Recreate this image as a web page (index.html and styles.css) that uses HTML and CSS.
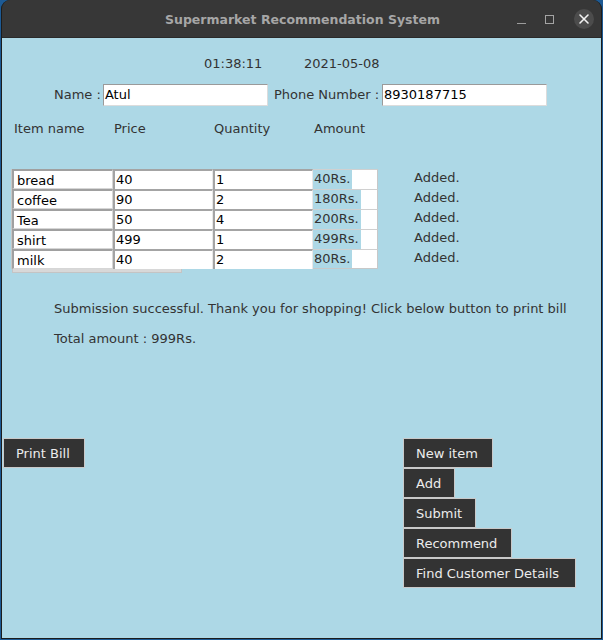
FILE: index.html
```html
<!DOCTYPE html>
<html>
<head>
<meta charset="utf-8">
<title>Supermarket Recommendation System</title>
<link rel="stylesheet" href="styles.css">
</head>
<body>
<div class="window">
  <div class="titlebar">
    <div class="title">Supermarket Recommendation System</div>
    <div class="controls">
      <span class="ctl min"></span>
      <span class="ctl max"></span>
      <span class="ctl close">
        <svg width="20" height="20" viewBox="0 0 20 20"><path d="M6 6 L14 14 M14 6 L6 14" stroke="#f2f2f2" stroke-width="1.6" stroke-linecap="round"/></svg>
      </span>
    </div>
  </div>
  <div class="content">
    <div class="datetime">
      <span class="dt">01:38:11</span>
      <span class="dt">2021-05-08</span>
    </div>
    <div class="customer">
      <span class="lbl name-lbl">Name :</span>
      <div class="entry wide">Atul</div>
      <span class="lbl phone-lbl">Phone Number :</span>
      <div class="entry wide">8930187715</div>
    </div>
    <div class="headers">
      <span>Item name</span>
      <span>Price</span>
      <span>Quantity</span>
      <span>Amount</span>
    </div>
    <div class="table-wrap">
      <div class="table">
        <div class="row"><div class="cell item">bread</div><div class="cell num">40</div><div class="cell num">1</div><div class="amount"><span class="amt">40Rs.</span></div><span class="status">Added.</span></div>
        <div class="row"><div class="cell item">coffee</div><div class="cell num">90</div><div class="cell num">2</div><div class="amount"><span class="amt">180Rs.</span></div><span class="status">Added.</span></div>
        <div class="row"><div class="cell item">Tea</div><div class="cell num">50</div><div class="cell num">4</div><div class="amount"><span class="amt">200Rs.</span></div><span class="status">Added.</span></div>
        <div class="row"><div class="cell item">shirt</div><div class="cell num">499</div><div class="cell num">1</div><div class="amount"><span class="amt">499Rs.</span></div><span class="status">Added.</span></div>
        <div class="row"><div class="cell item">milk</div><div class="cell num">40</div><div class="cell num">2</div><div class="amount"><span class="amt">80Rs.</span></div><span class="status">Added.</span></div>
      </div>
      <div class="strip"></div>
    </div>
    <p class="msg first">Submission successful. Thank you for shopping! Click below button to print bill</p>
    <p class="msg">Total amount : 999Rs.</p>
    <div class="actions">
      <div class="left-col">
        <button class="btn print">Print Bill</button>
      </div>
      <div class="right-col">
        <button class="btn w-new">New item</button>
        <button class="btn w-add">Add</button>
        <button class="btn w-submit">Submit</button>
        <button class="btn w-rec">Recommend</button>
        <button class="btn w-find">Find Customer Details</button>
      </div>
    </div>
  </div>
</div>
</body>
</html>
```
FILE: styles.css
```css
* { box-sizing: border-box; }
html, body {
  margin: 0;
  padding: 0;
  width: 603px;
  height: 640px;
  overflow: hidden;
  background: #1d5a94;
}
.window {
  margin-left: 1px;
  width: 601px;
  height: 639px;
  display: flex;
  flex-direction: column;
  border-radius: 9px 9px 0 0;
  overflow: hidden;
  background: #222;
  border: 1px solid #1c1c1c;
  border-top: none;
}
.titlebar {
  height: 38px;
  flex: none;
  background: #373737;
  position: relative;
  display: flex;
  align-items: center;
  justify-content: center;
  border-bottom: 1px solid #2a2a2a;
}
.title {
  font-family: "DejaVu Sans", sans-serif;
  font-weight: bold;
  font-size: 12.5px;
  color: #a6a6a6;
  margin-left: 2px;
  margin-top: 1px;
}
.controls {
  position: absolute;
  right: 7px;
  top: 9px;
  display: flex;
  align-items: center;
}
.ctl { display: block; position: relative; }
.min {
  width: 9px;
  height: 1px;
  background: #9c9c9c;
  margin-top: 9px;
  margin-right: 19px;
}
.max {
  width: 9px;
  height: 9px;
  border: 1px solid #a4a4a4;
  margin-right: 20px;
}
.close {
  width: 20px;
  height: 20px;
  border-radius: 50%;
  background: #4c4c4c;
}
.close svg { display: block; }

.content {
  flex: 1;
  background: #add8e6;
  font-family: "DejaVu Sans", sans-serif;
  font-size: 13px;
  color: #333;
  line-height: 16px;
}
.datetime {
  margin-top: 18px;
  display: flex;
  padding-left: 202px;
  height: 16px;
}
.dt { width: 100px; }
.customer {
  margin-top: 12px;
  display: flex;
  align-items: center;
  height: 22px;
}
.lbl { white-space: nowrap; }
.name-lbl { margin-left: 52px; margin-right: 2px; }
.phone-lbl { margin-left: 6px; margin-right: 3px; }
.entry {
  height: 22px;
  background: #fff;
  color: #000;
  border: 1px solid;
  border-color: #9a9a9a #dcdcdc #dcdcdc #9a9a9a;
  padding: 2px 1px;
  line-height: 16px;
}
.wide { width: 165px; }
.headers {
  margin-top: 15px;
  height: 16px;
  display: grid;
  grid-template-columns: repeat(4, 100px);
  padding-left: 12px;
}
.table-wrap {
  margin-top: 31px;
  margin-left: 10px;
}
.table {
  display: flex;
  flex-direction: column;
}
.row {
  display: flex;
  height: 20px;
  align-items: stretch;
}
.row:first-child { margin-top: 1px; }
.cell, .amount { flex: none; }
.cell {
  background: #fff;
  color: #000;
  line-height: 16px;
  border: 1px solid;
}
.item {
  width: 101px;
  border-width: 2px 1px 1px 2px;
  border-color: #a0a0a0 #d6d6d6 #d6d6d6 #a0a0a0;
  padding: 2px 2px 0 3px;
  box-shadow: -1px 0 0 #c8c8c8;
}
.num {
  width: 100px;
  border-width: 2px 1px 0 2px;
  border-color: #a4a4a4 #e8e8e8 #e8e8e8 #a4a4a4;
  padding: 1px 1px 0 1px;
}
.amount {
  width: 65px;
  background: #fff;
  border-right: 1px solid #c8c8c8;
  border-top: 1px solid #d0d0d0;
  display: flex;
}
.amt {
  background: #add8e6;
  padding: 1px 2px 0 1px;
  color: #333;
  height: 100%;
}
.status {
  margin-left: 36px;
  color: #333;
  line-height: 18px;
  align-self: flex-start;
}
.row:last-child .amount { border-bottom: 1px solid #c8c8c8; }
.strip {
  width: 170px;
  height: 4px;
  background: #d8d8d8;
  border: 1px solid #c4c4c4;
  border-top: none;
}
.msg {
  margin: 28px 0 0 52px;
  height: 16px;
}
.msg + .msg { margin-top: 14px; }
.actions {
  margin-top: 91px;
  display: grid;
  grid-template-columns: 400px auto;
  padding-left: 1px;
}
.left-col, .right-col {
  display: flex;
  flex-direction: column;
  align-items: flex-start;
}
.btn {
  height: 30px;
  background: #333333;
  color: #ececec;
  border: 1px solid #c9c9c9;
  font-family: "DejaVu Sans", sans-serif;
  font-size: 13px;
  line-height: 16px;
  padding: 2px 0 0 12px;
  text-align: left;
  margin: 0;
  border-radius: 0;
}
.print { width: 82px; }
.w-new { width: 90px; }
.w-add { width: 52px; }
.w-submit { width: 73px; }
.w-rec { width: 109px; }
.w-find { width: 173px; }
```
